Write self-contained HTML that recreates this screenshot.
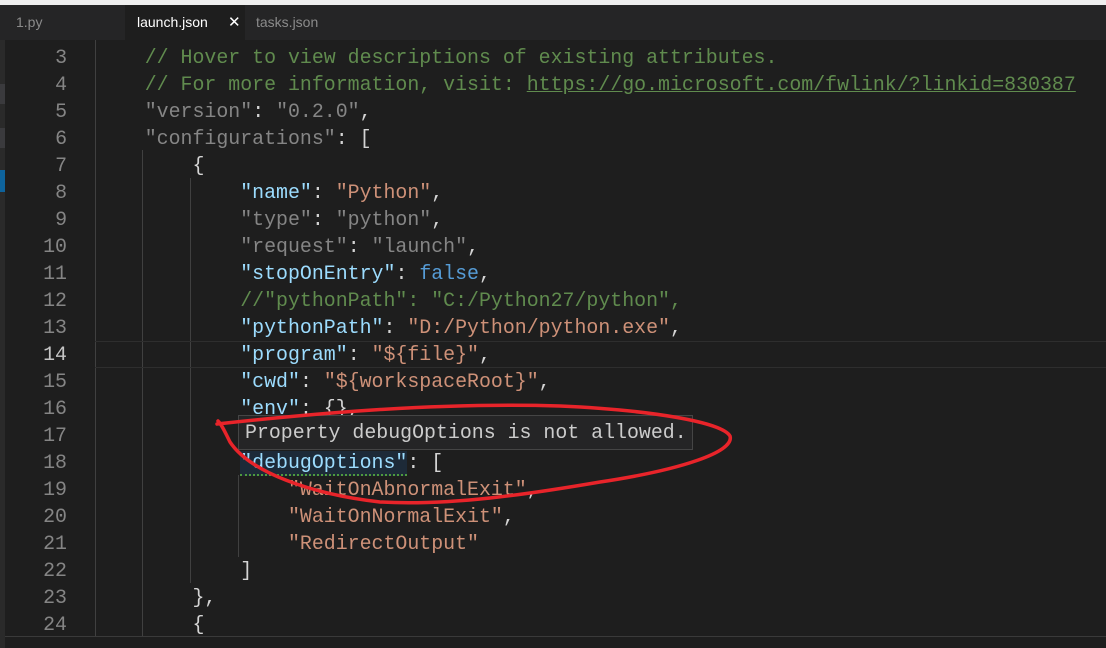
<!DOCTYPE html>
<html><head><meta charset="utf-8"><style>
body{margin:0;width:1106px;height:648px;overflow:hidden;background:#1e1e1e;position:relative;font-family:"Liberation Mono","DejaVu Sans Mono",monospace}
.top{position:absolute;left:0;top:0;width:1106px;height:5px;background:#efefef}
.tabs{position:absolute;left:0;top:5px;width:1106px;height:35px;background:#252526}
.tab{position:absolute;top:0;height:35px;line-height:35px;font-family:"Liberation Sans",sans-serif;font-size:14px;color:#8b8b8b}
.ln{position:absolute;left:0;width:67px;text-align:right;font-size:19.9px;color:#858585;height:27px;line-height:27px}
.code{position:absolute;left:97px;font-size:19.9px;height:27px;line-height:27px;white-space:pre;color:#d4d4d4}
.c{color:#608b4e}.k{color:#9cdcfe}.s{color:#ce9178}.g{color:#858585}.b{color:#569cd6}
.guide{position:absolute;width:1px;background:#404040}
</style></head><body>
<div class="top"></div>
<div class="tabs">
 <div class="tab" style="left:0;width:125px;padding-left:16px;box-sizing:border-box">1.py</div>
 <div class="tab" style="left:125px;width:120px;background:#1e1e1e;color:#fff;padding-left:12px;box-sizing:border-box">launch.json<span style="position:absolute;left:103px;font-size:15px">✕</span></div>
 <div class="tab" style="left:245px;width:120px;padding-left:11px;box-sizing:border-box">tasks.json</div>
</div>
<div style="position:absolute;left:0;top:40px;width:5px;height:608px;background:#2a2a2a"></div>
<div style="position:absolute;left:0;top:84px;width:5px;height:20px;background:#3a3a3d"></div>
<div style="position:absolute;left:0;top:128px;width:5px;height:20px;background:#3a3a3d"></div>
<div style="position:absolute;left:0;top:170px;width:5px;height:22px;background:#0e639c"></div>
<div class="guide" style="left:95px;top:40px;height:597px"></div>
<div class="guide" style="left:142px;top:150px;height:487px"></div>
<div class="guide" style="left:190px;top:178px;height:405px"></div>
<div class="guide" style="left:238px;top:475px;height:82px"></div>
<div style="position:absolute;left:95px;top:341px;width:1011px;height:25px;border-top:1px solid #2e2e2e;border-bottom:1px solid #2e2e2e"></div>
<div style="position:absolute;left:5px;top:636px;width:1101px;height:1px;background:#3a3a3a"></div>

<div class="ln" style="top:44px">3</div><div class="code" style="top:44px">    <span class="c">// Hover to view descriptions of existing attributes.</span></div>
<div class="ln" style="top:71px">4</div><div class="code" style="top:71px">    <span class="c">// For more information, visit: <u>https://go.microsoft.com/fwlink/?linkid=830387</u></span></div>
<div class="ln" style="top:98px">5</div><div class="code" style="top:98px">    <span class="g">"version"</span>: <span class="g">"0.2.0"</span>,</div>
<div class="ln" style="top:125px">6</div><div class="code" style="top:125px">    <span class="g">"configurations"</span>: [</div>
<div class="ln" style="top:152px">7</div><div class="code" style="top:152px">        {</div>
<div class="ln" style="top:179px">8</div><div class="code" style="top:179px">            <span class="k">"name"</span>: <span class="s">"Python"</span>,</div>
<div class="ln" style="top:206px">9</div><div class="code" style="top:206px">            <span class="g">"type"</span>: <span class="g">"python"</span>,</div>
<div class="ln" style="top:233px">10</div><div class="code" style="top:233px">            <span class="g">"request"</span>: <span class="g">"launch"</span>,</div>
<div class="ln" style="top:260px">11</div><div class="code" style="top:260px">            <span class="k">"stopOnEntry"</span>: <span class="b">false</span>,</div>
<div class="ln" style="top:287px">12</div><div class="code" style="top:287px">            <span class="c">//"pythonPath": "C:/Python27/python",</span></div>
<div class="ln" style="top:314px">13</div><div class="code" style="top:314px">            <span class="k">"pythonPath"</span>: <span class="s">"D:/Python/python.exe"</span>,</div>
<div class="ln" style="top:341px;color:#c6c6c6">14</div><div class="code" style="top:341px">            <span class="k">"program"</span>: <span class="s">"${file}"</span>,</div>
<div class="ln" style="top:368px">15</div><div class="code" style="top:368px">            <span class="k">"cwd"</span>: <span class="s">"${workspaceRoot}"</span>,</div>
<div class="ln" style="top:395px">16</div><div class="code" style="top:395px">            <span class="k">"env"</span>: {},</div>
<div class="ln" style="top:422px">17</div>
<div class="ln" style="top:449px">18</div><div class="code" style="top:449px">            <span class="k" style="background:#1d2a38;border-bottom:2px dotted #4e9a3e">"debugOptions"</span>: [</div>
<div class="ln" style="top:476px">19</div><div class="code" style="top:476px">                <span class="s">"WaitOnAbnormalExit"</span>,</div>
<div class="ln" style="top:503px">20</div><div class="code" style="top:503px">                <span class="s">"WaitOnNormalExit"</span>,</div>
<div class="ln" style="top:530px">21</div><div class="code" style="top:530px">                <span class="s">"RedirectOutput"</span></div>
<div class="ln" style="top:557px">22</div><div class="code" style="top:557px">            ]</div>
<div class="ln" style="top:584px">23</div><div class="code" style="top:584px">        },</div>
<div class="ln" style="top:611px">24</div><div class="code" style="top:611px">        {</div>

<div style="position:absolute;left:238px;top:415px;width:455px;height:35px;background:#252526;border:1px solid #454545;box-sizing:border-box;font-size:19.9px;line-height:33px;color:#cccccc;padding-left:6px;white-space:pre">Property debugOptions is not allowed.</div>
<svg style="position:absolute;left:0;top:0" width="1106" height="648"><path d="M217 424 C 300 415, 430 402, 560 406 C 650 410, 722 422, 730 436 C 735 452, 680 470, 600 482 C 530 494, 450 506, 380 502 C 310 494, 250 472, 230 442 C 225 432, 222 425, 218 421" fill="none" stroke="#e8242a" stroke-width="3.5" stroke-linecap="round"/></svg>
</body></html>
